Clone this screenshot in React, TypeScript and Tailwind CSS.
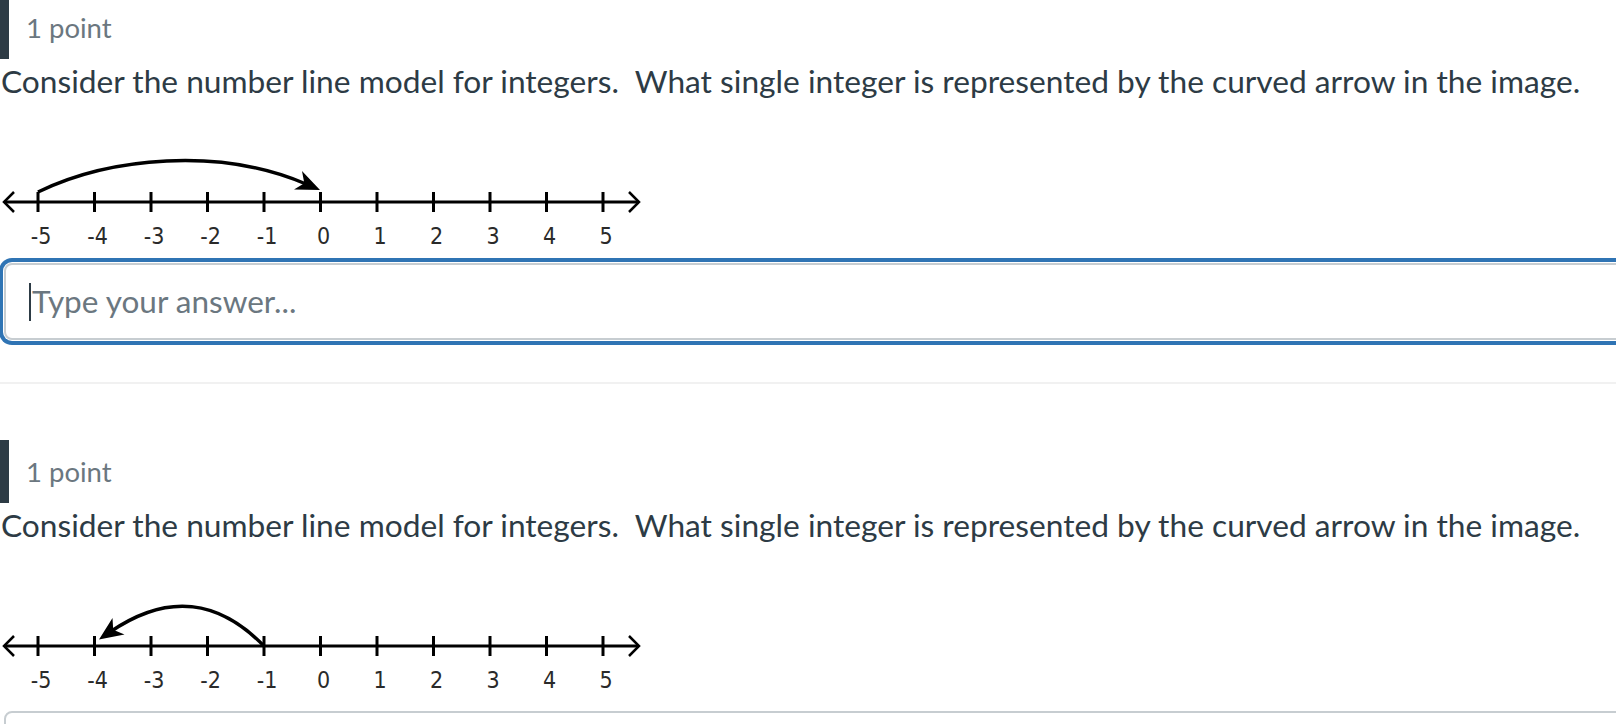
import React from "react";

type Arc = {
  path: string;
  head: string;
};

const QUESTION =
  "Consider the number line model for integers.\u00a0 What single integer is represented by the curved arrow in the image.";

const TICKS = [-5, -4, -3, -2, -1, 0, 1, 2, 3, 4, 5];

// arc from -5 to 0
const arcForward: Arc = {
  path: "M38 50 C 110 15, 220 5, 306 42",
  head: "320,48 302,29 304.3,41.2 294,47.5",
};

// arc from -1 back to -4
const arcBack: Arc = {
  path: "M264 60 C 220 15, 170 5, 110 46",
  head: "99,53.5 112.5,32 113.2,43.8 124.5,48.5",
};

export default function App() {
  return (
    <div className="w-[1616px] h-[724px] overflow-hidden bg-white font-['Lato','Noto_Sans',sans-serif]">
      <div className="w-[1680px] -mt-[4px]">
        <Question arc={arcForward} focused inputGap="mt-[11px]" />
        <div className="mt-[42px] h-[2px] bg-[#f1f1f1]" />
        <div className="mt-[56px]">
          <Question arc={arcBack} inputGap="mt-[15px]" />
        </div>
      </div>
    </div>
  );
}

function Question({
  arc,
  focused = false,
  inputGap,
}: {
  arc: Arc;
  focused?: boolean;
  inputGap: string;
}) {
  return (
    <section>
      {/* points header */}
      <div className="flex items-center h-[63px]">
        <div className="w-[9px] h-full bg-[#2d3b45]" />
        <span className="ml-[17px] text-[27.5px] leading-none text-[#6b7780]">
          1 point
        </span>
      </div>

      <p className="mt-[2px] pl-[1px] text-[31.7px] leading-[40px] text-[#2d3b45] whitespace-nowrap">
        {QUESTION}
      </p>

      <NumberLine arc={arc} />

      {/* answer box */}
      <div
        className={
          focused
            ? `${inputGap} ml-[4px] h-[77px] rounded-[8px] border-2 border-[#c7cdd1] bg-white flex items-center pl-[23px] shadow-[0_0_0_1px_#ffffff,0_0_0_5px_#2f74b4]`
            : `${inputGap} ml-[4px] h-[77px] rounded-[8px] border-2 border-[#c7cdd1] bg-white flex items-center pl-[23px]`
        }
      >
        {focused && (
          <>
            <span className="w-[2px] h-[38px] bg-[#2d3b45]" />
            <span className="ml-[1px] text-[31.5px] text-[#6b7780]">Type your answer...</span>
          </>
        )}
      </div>
    </section>
  );
}

function NumberLine({ arc }: { arc: Arc }) {
  return (
    <svg
      className="block mt-[41px]"
      width={645}
      height={110}
      viewBox="0 0 645 110"
    >
      {/* axis */}
      <line x1={4} y1={60} x2={639} y2={60} stroke="#000" strokeWidth={3} />
      <polyline points="14,50 4,60 14,70" fill="none" stroke="#000" strokeWidth={2.5} />
      <polyline points="629,50 639,60 629,70" fill="none" stroke="#000" strokeWidth={2.5} />

      {TICKS.map((n, i) => {
        const x = 38 + i * 56.5;
        return (
          <g key={n}>
            <line x1={x} y1={50} x2={x} y2={70} stroke="#000" strokeWidth={3} />
            <text
              x={x + 3}
              y={102}
              textAnchor="middle"
              fontSize={23}
              fontFamily="'DejaVu Sans Condensed', 'DejaVu Sans', sans-serif"
              fill="#2a2a2a"
            >
              {n}
            </text>
          </g>
        );
      })}

      {/* curved jump */}
      <path d={arc.path} fill="none" stroke="#000" strokeWidth={3.5} />
      <polygon points={arc.head} fill="#000" />
    </svg>
  );
}
